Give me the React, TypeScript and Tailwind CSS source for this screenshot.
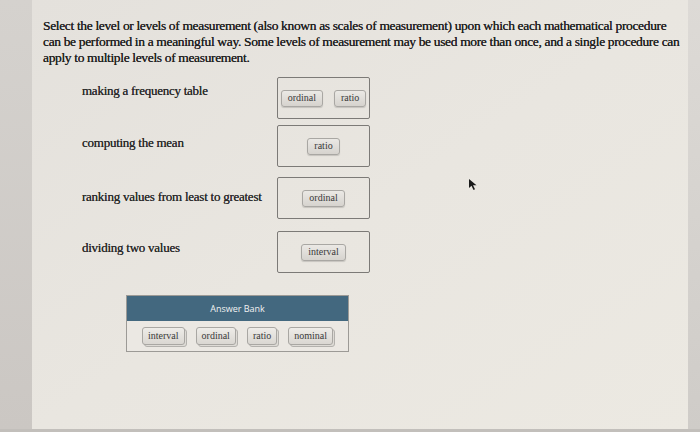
import React from "react";

const serif = { fontFamily: '"Liberation Serif", "Times New Roman", serif' };

function Chip({ label }: { label: string }) {
  return (
    <span
      className="inline-flex items-center justify-center h-[17px] px-[6px] rounded-[3px] border border-[#a9a7a3] bg-gradient-to-b from-[#ebe9e5] to-[#d6d3ce] text-[10px] leading-none text-[#3a3a3a] shadow-[0_1px_1px_rgba(0,0,0,0.15)]"
      style={serif}
    >
      {label}
    </span>
  );
}

function BankChip({ label }: { label: string }) {
  return (
    <span className="relative inline-flex">
      <span className="absolute left-[2px] top-[2px] right-[-2px] bottom-[-2px] rounded-[3px] border border-[#b3b1ad] bg-[#dedbd6]" />
      <span
        className="relative inline-flex items-center justify-center h-[18px] px-[5px] rounded-[3px] border border-[#a9a7a3] bg-gradient-to-b from-[#eeece8] to-[#dad7d2] text-[10px] leading-none text-[#3a3a3a]"
        style={serif}
      >
        {label}
      </span>
    </span>
  );
}

function Row({ label, chips, mt, lmt }: { label: string; chips: string[]; mt: string; lmt: string }) {
  return (
    <div className={`flex items-center ${mt}`}>
      <div
        className={`w-[195px] text-[13px] leading-[16px] tracking-[-0.25px] text-[#2c2c2c] [text-shadow:0_0_0.2px_#2c2c2c] ${lmt}`}
        style={serif}
      >
        {label}
      </div>
      <div className="w-[93px] h-[42px] rounded-[2px] border-[1.5px] border-[#7c7a77] flex items-center justify-center gap-[11px]">
        {chips.map((c) => (
          <Chip key={c} label={c} />
        ))}
      </div>
    </div>
  );
}

export default function App() {
  return (
    <div className="w-[700px] h-[432px] flex flex-col overflow-hidden bg-[#d3d0cc]">
      <div className="flex flex-1">
        <div className="w-[32px] bg-gradient-to-b from-[#d5d2ce] to-[#cbc7c3]" />
        <div className="relative flex-1 bg-gradient-to-br from-[#e4e1dc] via-[#e9e6e0] to-[#ece9e2] pl-[11px] pt-[18px]">
          <p
            className="whitespace-nowrap text-[13.5px] leading-[16px] tracking-[-0.35px] text-[#222] [text-shadow:0_0_0.35px_#222]"
            style={serif}
          >
            Select the level or levels of measurement (also known as scales of measurement) upon which each mathematical procedure
            <br />
            can be performed in a meaningful way. Some levels of measurement may be used more than once, and a single procedure can
            <br />
            apply to multiple levels of measurement.
          </p>
          <div className="flex flex-col pl-[39px] mt-[11px]">
            <Row label="making a frequency table" chips={["ordinal", "ratio"]} mt="mt-0" lmt="-mt-[14px]" />
            <Row label="computing the mean" chips={["ratio"]} mt="mt-[6px]" lmt="-mt-[6px]" />
            <Row label="ranking values from least to greatest" chips={["ordinal"]} mt="mt-[10px]" lmt="-mt-[2px]" />
            <Row label="dividing two values" chips={["interval"]} mt="mt-[12px]" lmt="-mt-[8px]" />
          </div>
          <div className="ml-[83px] mt-[22px] w-[223px] border border-[#9c9a96]">
            <div
              className="h-[25px] bg-[#43687f] flex items-center justify-center text-[9px] text-[#f2f2f2]"
              style={{ fontFamily: '"Open Sans", "Liberation Sans", sans-serif' }}
            >
              Answer Bank
            </div>
            <div className="h-[30px] bg-[#ebe8e3] flex items-center pl-[15px] gap-[11px]">
              <BankChip label="interval" />
              <BankChip label="ordinal" />
              <BankChip label="ratio" />
              <BankChip label="nominal" />
            </div>
          </div>
          <svg className="absolute left-[436px] top-[178px]" width="10" height="13" viewBox="0 0 10 13">
            <path d="M1 1 L1 10 L3.5 7.8 L5.5 12 L7 11.3 L5 7.2 L8.5 7.2 Z" fill="#1a1a1a" />
          </svg>
        </div>
        <div className="w-[12px] bg-gradient-to-b from-[#dddad6] to-[#cfccc8]" />
      </div>
      <div className="h-[3px] bg-[#c2bfbb]" />
    </div>
  );
}
